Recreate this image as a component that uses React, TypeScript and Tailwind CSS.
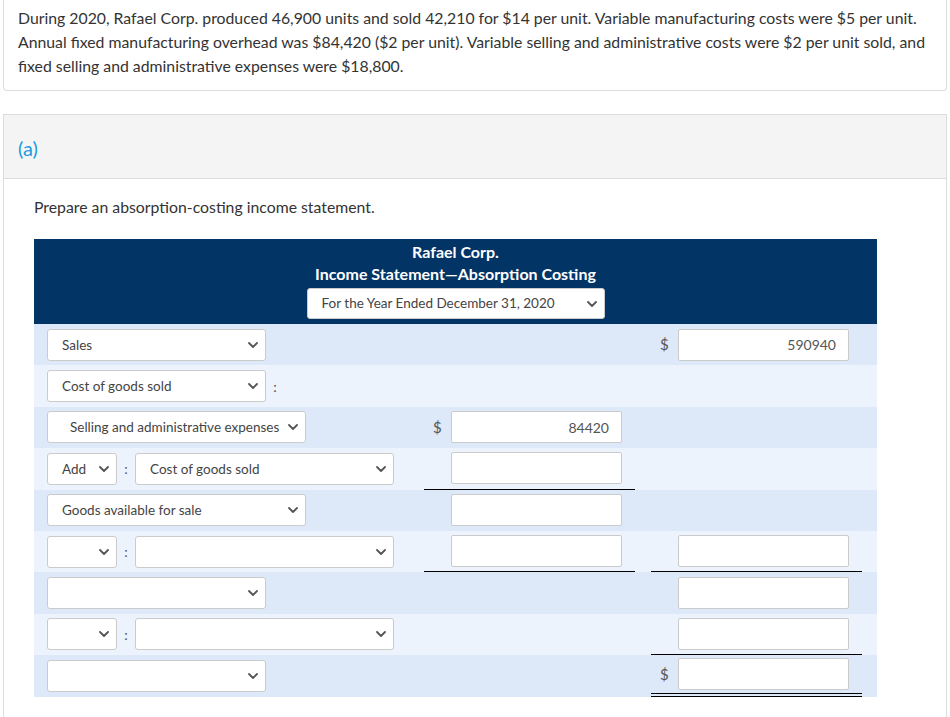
import React from 'react';
import clsx from 'clsx';

const FONT = "font-['Lato','Liberation_Sans',sans-serif]";

// small grey chevron shown over the native select
const Chevron = () => (
  <svg
    width="10"
    height="6"
    viewBox="0 0 10 6"
    className="pointer-events-none absolute right-[8px] top-1/2 -translate-y-1/2"
  >
    <path d="M1 1l4 4 4-4" fill="none" stroke="#555" strokeWidth="1.8" strokeLinecap="round" strokeLinejoin="round" />
  </svg>
);

const Dropdown = ({
  value = '',
  width,
  textClass = 'pl-[14px] pr-[24px]',
}: {
  value?: string;
  width: string;
  textClass?: string;
}) => (
  <div className={clsx('relative h-[32px] shrink-0', width)}>
    <select
      value={value}
      onChange={() => {}}
      className={clsx(
        'h-full w-full appearance-none rounded-[3px] border border-[#cbcbcb] bg-white text-[13.5px] text-[#444] outline-none',
        textClass
      )}
    >
      <option value={value}>{value}</option>
    </select>
    <Chevron />
  </div>
);

const Colon = () => <span className="w-[18px] shrink-0 text-center text-[14px] text-[#555]">:</span>;

// one money column: optional "$", optional input, optional rule under it
const Amount = ({
  input = true,
  dollar = false,
  value = '',
  line = false,
  double = false,
}: {
  input?: boolean;
  dollar?: boolean;
  value?: string;
  line?: boolean;
  double?: boolean;
}) => (
  <div
    className={clsx(
      'flex h-full w-[211px] shrink-0 items-center',
      line && 'border-b border-black',
      double && 'border-b-[4px] border-double border-black'
    )}
  >
    <span className="w-[27px] shrink-0 pl-[9px] text-[15px] text-[#555]">{dollar ? '$' : ''}</span>
    {input && (
      <input
        type="text"
        readOnly
        value={value}
        className="h-[32px] w-[171px] rounded-[2px] border border-[#cbcbcb] bg-white pr-[12px] text-right text-[14px] text-[#555] outline-none"
      />
    )}
  </div>
);

const Row = ({ dark, children }: { dark: boolean; children: React.ReactNode }) => (
  <div className={clsx('flex h-[41.4px] items-stretch pl-[13px]', dark ? 'bg-[#dde8f8]' : 'bg-[#ecf3fd]')}>
    {children}
  </div>
);

const Left = ({ children }: { children?: React.ReactNode }) => (
  <div className="flex w-[377px] shrink-0 items-center">{children}</div>
);

const Gap = () => <div className="w-[16px] shrink-0" />;

export default function App() {
  return (
    <div className={clsx('min-h-[717px] bg-white text-[#333]', FONT)}>
      {/* problem text */}
      <div className="ml-[3px] w-[944px] whitespace-nowrap rounded-b-[4px] border-x border-b border-[#dcdcdc] px-[14px] pb-[12px] pt-[6px] text-[15.8px] leading-[24px] text-[#333]">
        During 2020, Rafael Corp. produced 46,900 units and sold 42,210 for $14 per unit. Variable manufacturing costs were $5 per unit.
        <br />
        Annual fixed manufacturing overhead was $84,420 ($2 per unit). Variable selling and administrative costs were $2 per unit sold, and
        <br />
        fixed selling and administrative expenses were $18,800.
      </div>

      {/* part (a) */}
      <div className="ml-[3px] mt-[23px] min-h-[603px] w-[944px] border-x border-t border-[#dcdcdc]">
        <div className="flex h-[64px] items-center border-b border-[#dcdcdc] bg-[#f4f4f4] px-[14px] pt-[3px] text-[20px] text-[#1e9ae0]">
          (a)
        </div>

        <div className="pl-[30px] pt-[16px]">
          <p className="text-[15.8px] leading-[24px] text-[#333]">Prepare an absorption-costing income statement.</p>

          <div className="mt-[20px] w-[843px]">
            {/* heading */}
            <div className="flex h-[85px] flex-col items-center bg-[#033466] pt-[2px] text-white">
              <div className="text-[16px] font-bold leading-[22px]">Rafael Corp.</div>
              <div className="text-[16px] font-bold leading-[22px]">Income Statement—Absorption Costing</div>
              <div className="mt-[3px]">
                <Dropdown value="For the Year Ended December 31, 2020" width="w-[298px]" textClass="pl-[14px] pr-[24px] !h-[31px]" />
              </div>
            </div>

            <Row dark>
              <Left>
                <Dropdown value="Sales" width="w-[219px]" />
              </Left>
              <Amount input={false} />
              <Gap />
              <Amount dollar value="590940" />
            </Row>

            <Row dark={false}>
              <Left>
                <Dropdown value="Cost of goods sold" width="w-[219px]" />
                <Colon />
              </Left>
              <Amount input={false} />
              <Gap />
              <Amount input={false} />
            </Row>

            <Row dark>
              <Left>
                <Dropdown value="Selling and administrative expenses" width="w-[259px]" textClass="pl-[22px] pr-[12px]" />
              </Left>
              <Amount dollar value="84420" />
              <Gap />
              <Amount input={false} />
            </Row>

            <Row dark={false}>
              <Left>
                <Dropdown value="Add" width="w-[70px]" />
                <Colon />
                <Dropdown value="Cost of goods sold" width="w-[259px]" />
              </Left>
              <Amount line />
              <Gap />
              <Amount input={false} />
            </Row>

            <Row dark>
              <Left>
                <Dropdown value="Goods available for sale" width="w-[259px]" />
              </Left>
              <Amount />
              <Gap />
              <Amount input={false} />
            </Row>

            <Row dark={false}>
              <Left>
                <Dropdown width="w-[70px]" />
                <Colon />
                <Dropdown width="w-[259px]" />
              </Left>
              <Amount line />
              <Gap />
              <Amount line />
            </Row>

            <Row dark>
              <Left>
                <Dropdown width="w-[219px]" />
              </Left>
              <Amount input={false} />
              <Gap />
              <Amount />
            </Row>

            <Row dark={false}>
              <Left>
                <Dropdown width="w-[70px]" />
                <Colon />
                <Dropdown width="w-[259px]" />
              </Left>
              <Amount input={false} />
              <Gap />
              <Amount line />
            </Row>

            <Row dark>
              <Left>
                <Dropdown width="w-[219px]" />
              </Left>
              <Amount input={false} />
              <Gap />
              <Amount dollar double />
            </Row>
          </div>
        </div>
      </div>
    </div>
  );
}
